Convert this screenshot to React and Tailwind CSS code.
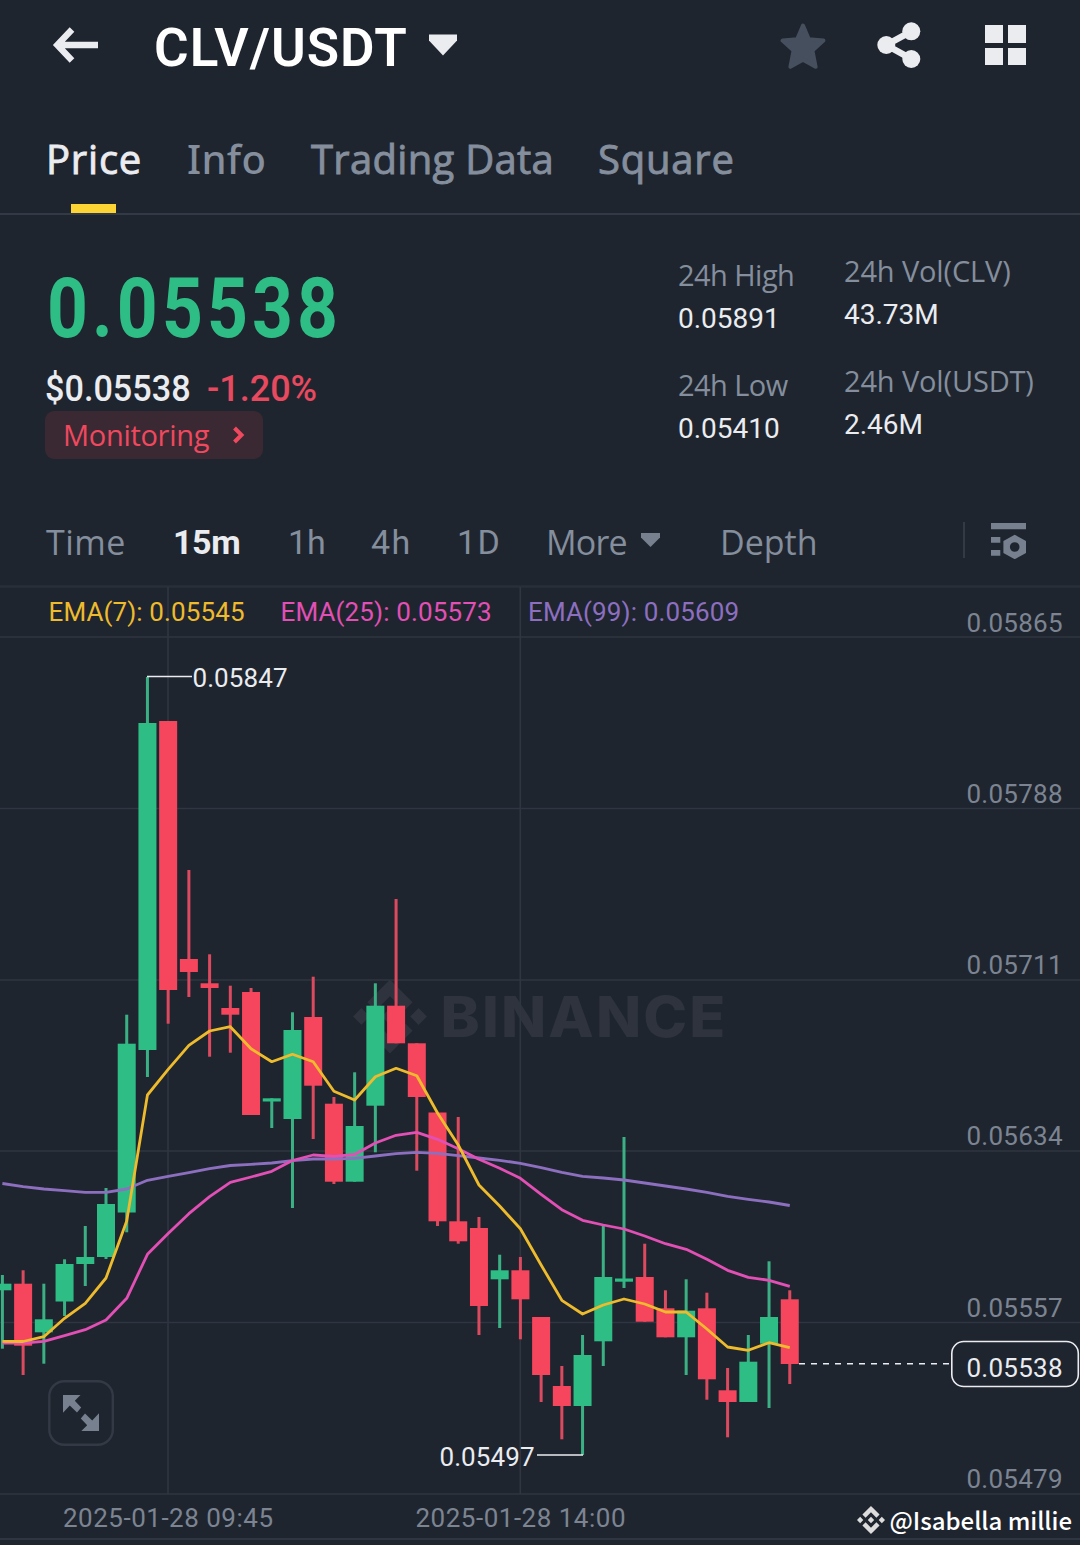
import { Fragment } from 'react';

const STEP = 20.72;
const FIRST_X = 2.4;

// [direction, high, body top, body bottom, low] in chart units
const candles = [
  ['up', 1275, 1283.7, 1290.3, 1348.7],
  ['down', 1270.3, 1283.7, 1345.7, 1375],
  ['up', 1283.7, 1319.3, 1332.3, 1363.7],
  ['up', 1259.3, 1264, 1301.5, 1316],
  ['up', 1226, 1257, 1264, 1286],
  ['up', 1188, 1204, 1257, 1259],
  ['up', 1014.7, 1043.7, 1212.5, 1232.3],
  ['up', 677, 723, 1050, 1077],
  ['down', 721, 721, 990, 1023.7],
  ['down', 870, 959, 972, 997],
  ['down', 954.3, 983.3, 988, 1056.7],
  ['down', 985.7, 1008, 1014.7, 1052.7],
  ['down', 988, 992, 1115, 1115],
  ['up', 1098.3, 1098.3, 1101.5, 1128],
  ['up', 1012.3, 1030, 1119, 1208],
  ['down', 976.7, 1017, 1085.7, 1139],
  ['down', 1097, 1103.7, 1181.7, 1184],
  ['up', 1072.3, 1126, 1181.7, 1181.7],
  ['up', 983.3, 1005.7, 1105.7, 1152.3],
  ['down', 899, 1005.7, 1043.3, 1043.3],
  ['down', 1043.3, 1043.3, 1097, 1170.7],
  ['down', 1112.5, 1112.5, 1221.3, 1226],
  ['down', 1117, 1221.3, 1241.3, 1243.7],
  ['down', 1217, 1228, 1306, 1335],
  ['up', 1254.7, 1270.3, 1279.3, 1328],
  ['down', 1257, 1270.3, 1299.3, 1339.3],
  ['down', 1317, 1317, 1375, 1402],
  ['down', 1366, 1386, 1406, 1439.3],
  ['up', 1335, 1355, 1406, 1455],
  ['up', 1226, 1277, 1341.3, 1366],
  ['up', 1137, 1278.5, 1281.7, 1288],
  ['down', 1243.7, 1277, 1321.7, 1321.7],
  ['down', 1290.3, 1308.3, 1337.3, 1337.3],
  ['up', 1279.3, 1310.7, 1337.3, 1375],
  ['down', 1292.7, 1308.3, 1379.3, 1399.7],
  ['down', 1368, 1390.3, 1402, 1437.3],
  ['up', 1335, 1361.7, 1402, 1402],
  ['up', 1261.3, 1317, 1343.7, 1408],
  ['down', 1290.3, 1299.3, 1364, 1384],
];

const ema7 = [1341.3, 1341.5, 1336.7, 1318.3, 1303.3, 1278, 1221, 1095, 1069.3, 1045.3, 1031, 1026.7, 1048.7, 1061.7, 1054.3, 1061.7, 1091.3, 1100, 1076.7, 1068.3, 1075.7, 1113, 1145, 1185, 1206, 1228.7, 1265, 1300.3, 1314, 1305, 1299, 1304, 1312, 1312, 1329, 1347, 1350.3, 1342.7, 1347.7];
const ema25 = [1343, 1343, 1341.3, 1335.7, 1329.7, 1320, 1298.3, 1254.3, 1233.5, 1213.7, 1196.7, 1182.3, 1177, 1171.3, 1160.5, 1155, 1156.3, 1154.5, 1143, 1135.3, 1132.3, 1139.3, 1148.7, 1159.3, 1168.3, 1178.3, 1194.3, 1209.7, 1220.3, 1225, 1229, 1236, 1243.7, 1249.3, 1259.3, 1270.3, 1277.3, 1280.3, 1286.3];
const ema99 = [1183.5, 1186.7, 1189, 1190.7, 1192.3, 1192.3, 1189, 1180.3, 1176.3, 1172.7, 1168.7, 1165.5, 1164.3, 1163, 1160.7, 1159, 1159, 1158.3, 1156, 1153.7, 1152.3, 1153.3, 1155.7, 1158, 1160.3, 1163.3, 1167.7, 1172.3, 1176.3, 1178, 1180, 1183, 1186, 1189, 1192.3, 1196.3, 1199.3, 1202, 1205.5];

const averages = [
  { name: 'EMA(99): 0.05609', color: '#8d6fc0', values: ema99, x: 528, width: 211 },
  { name: 'EMA(25): 0.05573', color: '#e24fb5', values: ema25, x: 280.5, width: 211 },
  { name: 'EMA(7): 0.05545', color: '#eebb2d', values: ema7, x: 48.5, width: 196 },
];

const priceAxis = [
  ['0.05865', 637, 631.5],
  ['0.05788', 808.5, 803],
  ['0.05711', 980, 974],
  ['0.05634', 1151, 1145],
  ['0.05557', 1322.5, 1317],
  ['0.05479', 1494, 1488],
];

const xAt = (i) => FIRST_X + i * STEP;
const toPoints = (values) => values.map((y, i) => `${xAt(i)},${y}`).join(' ');

const BinanceMark = ({ className, ...props }) => (
  <svg viewBox="0 0 24 24" className={className} fill="currentColor" {...props}>
    <path d="M16.624 13.9202l2.7175 2.7154-7.353 7.353-7.353-7.352 2.7175-2.7164 4.6355 4.6595 4.6356-4.6595zm4.6366-4.6366L24 12l-2.7154 2.7164L18.5682 12l2.6924-2.7164zm-9.272.001l2.7163 2.6914-2.7164 2.7174v-.001L9.2721 12l2.7164-2.7154zm-9.2722-.001L5.4088 12l-2.6914 2.6924L0 12l2.7164-2.7164zM11.9885.0115l7.353 7.329-2.7174 2.7154-4.6356-4.6356-4.6355 4.6595-2.7174-2.7154 7.353-7.353z" />
  </svg>
);

const Header = () => (
  <header className="flex h-[90px] items-center pl-[52px] pr-[54px]">
    <svg className="h-[38px] w-[46px]" viewBox="52 26 46 38" fill="none" stroke="#eaecef" strokeWidth="6.4">
      <path d="M72 29.5 57.3 45 72 60.5M57 45h41" />
    </svg>
    <h1 className="ml-[56px] w-[253px] whitespace-nowrap pt-[6px] font-['Roboto'] text-[53px] font-semibold leading-[84px] tracking-[1px] text-white">CLV/USDT</h1>
    <svg className="ml-[22px] h-[22px] w-[28px]" viewBox="0 0 28 22" fill="#eaecef">
      <path d="M0 .5h28v6L14 21.5 0 6.5z" />
    </svg>
    <div className="ml-auto flex items-center">
      <svg className="h-[48px] w-[48px]" viewBox="779 21 48 48" fill="#464f5e" stroke="#464f5e" strokeWidth="4" strokeLinejoin="round">
        <path d="M803 25.5l5.8 13.7 14.6 1.4-11 9.9 3.2 16.3-12.6-7-12.6 7 3.2-16.3-11-9.9 14.6-1.4z" />
      </svg>
      <svg className="ml-[49px] h-[48px] w-[46px]" viewBox="876 21 46 48" fill="#eaecef" stroke="#eaecef">
        <path d="M911.3 31.3 886.3 45l25 13.9" fill="none" strokeWidth="6.5" />
        <circle cx="886.3" cy="45" r="9" stroke="none" />
        <circle cx="911.3" cy="31.3" r="9" stroke="none" />
        <circle cx="911.3" cy="59" r="9" stroke="none" />
      </svg>
      <div className="ml-[63px] grid h-[40px] w-[41px] grid-cols-2 gap-[5px]">
        <span className="bg-[#eaecef]" />
        <span className="bg-[#eaecef]" />
        <span className="bg-[#eaecef]" />
        <span className="bg-[#eaecef]" />
      </div>
    </div>
  </header>
);

const Tabs = () => (
  <nav className="flex h-[125px] border-b-2 border-[#333a45] pl-[46px] pt-[41px] font-['Open_Sans'] text-[40px] leading-[56px] tracking-[0.3px] text-[#848e9c] [-webkit-text-stroke:0.9px_currentColor]">
    <div className="flex w-[141px] flex-col text-[#eaecef]">
      <span className="tracking-[0.8px]">Price</span>
      <span className="ml-[25px] mt-auto h-[9px] w-[45px] bg-[#fcd535]" />
    </div>
    <span className="w-[124px] font-['Noto_Sans'] font-medium [-webkit-text-stroke:0px]">Info</span>
    <span className="w-[287px]">Trading Data</span>
    <span className="tracking-[0.8px]">Square</span>
  </nav>
);

const Stat = ({ label, value }) => (
  <div className="whitespace-nowrap">
    <p className="font-['Open_Sans'] text-[29px] leading-[41px] text-[#848e9c]">{label}</p>
    <p className="mt-[2px] font-['Roboto'] text-[28px] leading-[43px] tracking-normal text-[#eaecef]">{value}</p>
  </div>
);

const Summary = () => (
  <section className="flex h-[285px] pl-[45px]">
    <div className="w-[633px] pt-[46px]">
      <p className="ml-[2px] origin-left scale-x-[0.85] whitespace-nowrap font-['Roboto'] text-[84px] font-bold leading-[96px] tracking-[4.8px] text-[#2ebd85]">0.05538</p>
      <p className="mt-[5px] flex h-[49px] font-['Roboto'] text-[36px] font-medium leading-[54px]">
        <span className="w-[162px] origin-left scale-x-[0.95] text-[#eaecef]">$0.05538</span>
        <span className="text-[#e8495f]">-1.20%</span>
      </p>
      <div className="flex h-[48px] w-[218px] items-center rounded-[9px] bg-[#3a2932] pl-[18px] text-[#f0485f]">
        <span className="w-[169px] font-['Open_Sans'] text-[29px] leading-[48px] tracking-[-0.3px]">Monitoring</span>
        <svg className="h-[18px] w-[14px]" viewBox="0 0 14 18" fill="none" stroke="currentColor" strokeWidth="4">
          <path d="M2.5 2 9.5 9l-7 7" />
        </svg>
      </div>
    </div>
    <div className="flex w-[166px] flex-col gap-[24px] pt-[39px] tracking-[-0.55px]">
      <Stat label="24h High" value="0.05891" />
      <Stat label="24h Low" value="0.05410" />
    </div>
    <div className="flex flex-col gap-[24px] pt-[35px] tracking-[-0.15px]">
      <Stat label="24h Vol(CLV)" value="43.73M" />
      <Stat label="24h Vol(USDT)" value="2.46M" />
    </div>
  </section>
);

const Intervals = () => (
  <div className="flex h-[85px] items-center pl-[46px] font-['Open_Sans'] text-[34px] leading-[85px] text-[#848e9c]">
    <span className="w-[127px] tracking-[0.5px]">Time</span>
    <span className="w-[115px] font-['Roboto'] font-bold tracking-[-0.4px] text-[#eaecef]">15m</span>
    <span className="w-[83px] font-['Roboto']">1h</span>
    <span className="w-[86px] font-['Roboto'] tracking-[1.5px]">4h</span>
    <span className="w-[89px] font-['Roboto'] tracking-[1.5px]">1D</span>
    <span className="w-[95px] tracking-[-0.8px]">More</span>
    <svg className="mb-[6px] h-[14px] w-[19px]" viewBox="0 0 19 14" fill="#76808f">
      <path d="M0 0h19v4.5L9.5 14 0 4.5z" />
    </svg>
    <span className="ml-[60px]">Depth</span>
    <span className="mb-[5px] ml-auto h-[36px] w-[2px] bg-[#333a45]" />
    <svg className="mb-[4px] ml-[25px] mr-[53px] h-[37px] w-[37px]" viewBox="990 522 37 37" fill="#76808f">
      <path d="M991 523h35v6.3h-35zM991 537h9.3v5.8H991zM991 550h9.3v5.8H991z" />
      <path fillRule="evenodd" d="M1014.7 534.8l11.3 6.2v12l-11.3 6.2-11.3-6.2v-12zm0 7.4a4.8 4.8 0 1 0 0 9.6 4.8 4.8 0 1 0 0-9.6z" />
    </svg>
  </div>
);

const Chart = () => (
  <svg className="block h-[960px] w-[1080px] font-['Roboto'] text-[26px]" viewBox="0 585 1080 960">
    <g fill="#2e333d">
      <BinanceMark x="353" y="979.5" width="74" height="74" fill="#2e333d" />
      <text x="440.5" y="1036.5" textLength="287" lengthAdjust="spacingAndGlyphs" className="font-['Inter'] text-[56px] font-extrabold tracking-[2px]">BINANCE</text>
    </g>

    <g stroke="#2f3641" strokeWidth="1.6">
      <path d="M0 586.5H1080" strokeWidth="2.4" stroke="#292f39" />
      {priceAxis.map(([label, y]) => <path key={label} d={`M0 ${y}H1080`} />)}
      <path d="M0 1539H1080" strokeWidth="2" />
      <path d="M168 587V1494M520.3 587V1494" />
    </g>

    {candles.map(([dir, high, top, bottom, low], i) => {
      const up = dir === 'up';
      return (
        <Fragment key={i}>
          <rect x={xAt(i) - 1.5} y={high} width="3" height={low - high} fill={up ? '#3bb084' : '#db4a5f'} />
          <rect x={xAt(i) - 9} y={top} width="18" height={bottom - top} fill={up ? '#2ebd85' : '#f6465d'} />
        </Fragment>
      );
    })}

    {averages.map(({ name, color, values, x, width }) => (
      <Fragment key={name}>
        <polyline points={toPoints(values)} fill="none" stroke={color} strokeWidth="2.8" strokeLinejoin="round" />
        <text x={x} y="620.8" fill={color} textLength={width}>{name}</text>
      </Fragment>
    ))}

    <g fill="#7c8492">
      {priceAxis.map(([label, , baseline]) => <text key={label} x="966.5" y={baseline} textLength="96">{label}</text>)}
      <text x="63" y="1527" textLength="210">2025-01-28 09:45</text>
      <text x="415.5" y="1527" textLength="210">2025-01-28 14:00</text>
    </g>

    <g fill="#eaecef">
      <path d="M147 676.5H192M537 1455H583" stroke="#eaecef" strokeWidth="1.6" />
      <text x="192.5" y="686.8" textLength="95">0.05847</text>
      <text x="439.5" y="1466" textLength="95">0.05497</text>
      <path d="M799 1363.7H949" stroke="#eaecef" strokeWidth="1.6" strokeDasharray="6 6" />
      <rect x="951.8" y="1341.5" width="126.5" height="45" rx="12" fill="#1f252f" stroke="#eaecef" strokeWidth="1.6" />
      <text x="966.5" y="1376.7" textLength="96">0.05538</text>
    </g>

    <rect x="49.3" y="1381.3" width="63.5" height="63.5" rx="15" fill="none" stroke="#333a45" strokeWidth="2.4" />
    <path d="M63 1395H80.5L74.8 1400.8 81.2 1407.6 77 1412.4 69.8 1405.6 63 1412.8zM99 1431H81.3L87.2 1425.2 80.8 1418.4 85 1413.6 92.2 1420.4 99 1413.2z" fill="#76808f" />
  </svg>
);

const App = () => (
  <main className="relative h-[1545px] w-[1080px] overflow-hidden bg-[#1f252f]">
    <Header />
    <Tabs />
    <Summary />
    <Intervals />
    <Chart />
    {/* author tag over the chart footer */}
    <div className="absolute bottom-[6px] right-[8px] flex items-center gap-[4px] font-['Noto_Sans_CJK_SC'] text-[24px] leading-[38px] text-white">
      <BinanceMark className="h-[28px] w-[28px] text-[#dcdcdc]" />
      <span className="font-medium">@Isabella millie</span>
    </div>
  </main>
);

export default App;
